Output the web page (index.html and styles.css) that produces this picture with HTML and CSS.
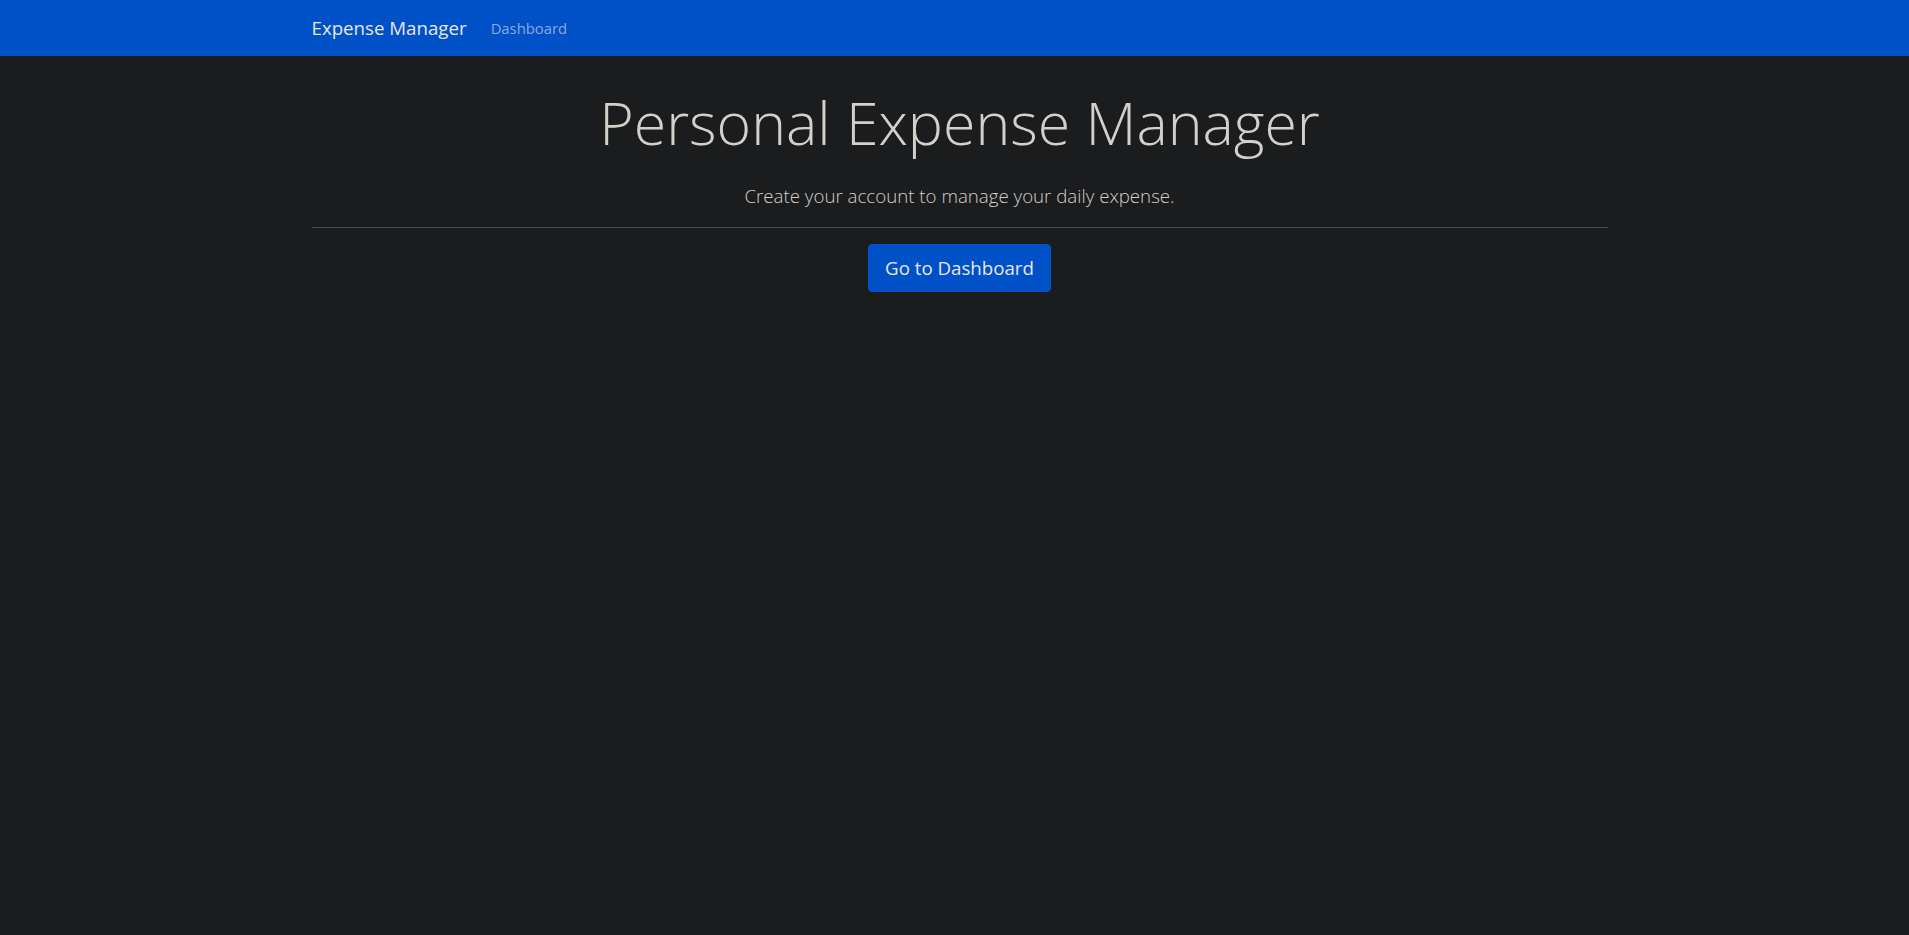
FILE: index.html
```html
<!DOCTYPE html>
<html lang="en">
<head>
<meta charset="utf-8">
<title>Expense Manager</title>
<link rel="stylesheet" href="styles.css">
</head>
<body>
<nav class="navbar">
  <div class="container nav-inner">
    <a class="brand" href="#">Expense Manager</a>
    <a class="nav-link" href="#">Dashboard</a>
  </div>
</nav>
<main class="container hero">
  <h1 class="title">Personal Expense Manager</h1>
  <p class="lead">Create your account to manage your daily expense.</p>
  <hr class="divider">
  <a class="btn" href="#">Go to Dashboard</a>
</main>
</body>
</html>
```

FILE: styles.css
```css
* { box-sizing: border-box; }
html, body { margin: 0; padding: 0; }
body {
  background: #1b1c1e;
  color: #d3cfc9;
  font-family: "Open Sans", "Noto Sans", sans-serif;
  font-size: 16px;
  line-height: 1.5;
  min-height: 935px;
}
.container {
  width: 1296px;
  margin-left: calc(50% - 643px);
}
.navbar {
  background: #0050c8;
  height: 56px;
  display: flex;
  align-items: center;
}
.nav-inner {
  display: flex;
  align-items: center;
}
.brand {
  color: #e8e6e3;
  text-decoration: none;
  font-size: 18.7px;
  line-height: 30px;
  margin-right: 16px;
}
.nav-link {
  color: #8fa8da;
  text-decoration: none;
  font-size: 14.8px;
  padding: 8px;
}
.hero {
  display: flex;
  flex-direction: column;
  align-items: center;
  padding-top: 28px;
}
.title {
  margin: 0 0 20px;
  font-size: 59px;
  font-weight: 300;
  line-height: 77px;
  color: #d3cfc9;
}
.lead {
  margin: 0 0 16px;
  font-size: 18.7px;
  font-weight: 300;
  line-height: 30px;
}
.divider {
  width: 100%;
  margin: 0 0 16px;
  border: 0;
  border-top: 1px solid #48494b;
  height: 0;
}
.btn {
  display: inline-block;
  background: #0050c8;
  color: #e8e6e3;
  text-decoration: none;
  font-size: 18.7px;
  line-height: 30px;
  padding: 8px 16px;
  border: 1px solid #0055d0;
  border-radius: 4px;
}
```
